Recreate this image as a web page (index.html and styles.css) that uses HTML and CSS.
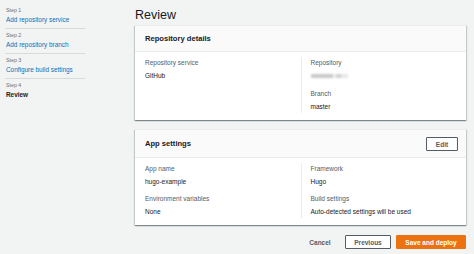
FILE: index.html
```html
<!DOCTYPE html>
<html>
<head>
<meta charset="utf-8">
<link rel="stylesheet" href="styles.css">
</head>
<body>
<div class="layout">
  <nav class="steps">
    <div class="step"><div class="step-num">Step 1</div><div class="step-title link">Add repository service</div></div>
    <div class="step"><div class="step-num">Step 2</div><div class="step-title link">Add repository branch</div></div>
    <div class="step"><div class="step-num">Step 3</div><div class="step-title link">Configure build settings</div></div>
    <div class="step last"><div class="step-num">Step 4</div><div class="step-title current">Review</div></div>
  </nav>
  <main class="main">
    <h1 class="title">Review</h1>
    <section class="card">
      <div class="card-head"><h2 class="card-title">Repository details</h2></div>
      <div class="card-body">
        <div class="col">
          <div class="field"><div class="label">Repository service</div><div class="value">GitHub</div></div>
        </div>
        <div class="col divided">
          <div class="field"><div class="label">Repository</div><div class="value"><span class="blurred"></span></div></div>
          <div class="field"><div class="label">Branch</div><div class="value">master</div></div>
        </div>
      </div>
    </section>
    <section class="card card-gap">
      <div class="card-head with-action"><h2 class="card-title">App settings</h2><button class="btn btn-edit">Edit</button></div>
      <div class="card-body tight">
        <div class="col">
          <div class="field"><div class="label">App name</div><div class="value">hugo-example</div></div>
          <div class="field"><div class="label">Environment variables</div><div class="value">None</div></div>
        </div>
        <div class="col divided">
          <div class="field"><div class="label">Framework</div><div class="value">Hugo</div></div>
          <div class="field"><div class="label">Build settings</div><div class="value">Auto-detected settings will be used</div></div>
        </div>
      </div>
    </section>
    <div class="actions">
      <button class="btn btn-link">Cancel</button>
      <button class="btn btn-normal">Previous</button>
      <button class="btn btn-primary">Save and deploy</button>
    </div>
  </main>
</div>
</body>
</html>
```
FILE: styles.css
```css
* { box-sizing: border-box; }
html, body {
  margin: 0;
  padding: 0;
  background: #f2f3f3;
  font-family: "Liberation Sans", Arial, sans-serif;
  color: #16191f;
  width: 474px;
  height: 254px;
  overflow: hidden;
}
.layout {
  display: flex;
  align-items: flex-start;
}
.steps {
  width: 80px;
  margin-left: 5px;
  padding-top: 4px;
  flex: none;
}
.step {
  padding: 1px 0 3px 1px;
  border-bottom: 1px solid #d5dbdb;
}
.step.last { border-bottom: none; }
.step-num {
  font-size: 5.3px;
  line-height: 10px;
  color: #687078;
}
.step-title {
  font-size: 6.4px;
  line-height: 10px;
  white-space: nowrap;
}
.step-title.link { color: #0073bb; }
.step-title.current { color: #16191f; font-weight: bold; }

.main {
  flex: 1;
  margin-left: 50px;
  padding: 6px 8px 0 0;
}
.title {
  margin: 0 0 1px;
  font-size: 12.5px;
  line-height: 18px;
  font-weight: normal;
  color: #16191f;
}
.card {
  background: #fff;
  box-shadow: 0 1px 1px rgba(0, 28, 36, 0.3), 1px 1px 1px rgba(0, 28, 36, 0.15), -1px 1px 1px rgba(0, 28, 36, 0.15);
  border-top: 1px solid #eaeded;
}
.card-gap { margin-top: 9px; }
.card-head {
  background: #fafafa;
  border-bottom: 1px solid #eaeded;
  padding: 7px 8px 6px 10px;
  display: flex;
  align-items: center;
  justify-content: space-between;
}
.card-head.with-action { padding-top: 7px; padding-bottom: 6px; }
.card-title {
  margin: 0;
  font-size: 7.6px;
  line-height: 12px;
  font-weight: bold;
}
.card-body {
  display: grid;
  grid-template-columns: 1fr 1fr;
  padding: 5px 10px 7px;
}
.col {
  display: flex;
  flex-direction: column;
  gap: 6px;
}
.card-body.tight .col { gap: 5px; }
.col.divided {
  border-left: 1px solid #eaeded;
  padding-left: 9px;
}
.label {
  font-size: 6.5px;
  line-height: 12px;
  color: #545b64;
}
.value {
  font-size: 6.5px;
  line-height: 12px;
  margin-top: 1px;
  color: #16191f;
}
.blurred {
  display: inline-block;
  width: 37px;
  height: 4px;
  vertical-align: middle;
  background: linear-gradient(90deg, #c9c9c9 0 60%, #efefef 60% 68%, #cfcfcf 68% 82%, #e6e6e6 82% 100%);
  filter: blur(0.8px);
}
.btn {
  font-family: "Liberation Sans", Arial, sans-serif;
  font-weight: bold;
  font-size: 6.5px;
  height: 14px;
  padding: 0;
  border-radius: 1px;
  cursor: pointer;
}
.btn-edit {
  width: 32px;
  background: #fff;
  border: 1px solid #545b64;
  color: #545b64;
}
.actions {
  margin-top: 10px;
  display: flex;
  justify-content: flex-end;
  align-items: center;
  gap: 5px;
}
.btn-link {
  background: transparent;
  border: none;
  color: #545b64;
  width: 22px;
  margin-right: 9px;
}
.btn-normal {
  width: 46px;
  background: #fff;
  border: 1px solid #545b64;
  color: #545b64;
}
.btn-primary {
  width: 70px;
  background: #ec7211;
  border: 1px solid #ec7211;
  color: #fff;
}
```
